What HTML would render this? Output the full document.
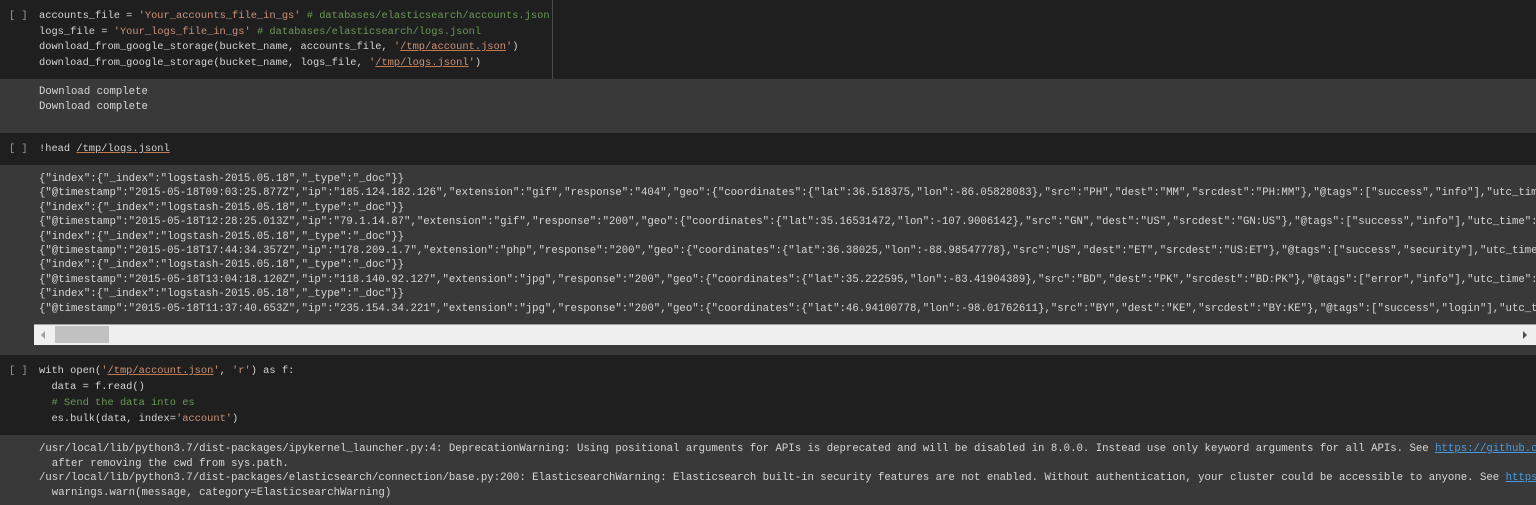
<!DOCTYPE html>
<html><head><meta charset="utf-8"><style>
html,body{margin:0;padding:0;width:1536px;height:505px;overflow:hidden;background:#1f1f1f;font-family:"Liberation Mono",monospace;}
.b{position:absolute;left:0;width:1536px}
.c{background:#1f1f1f}
.o{background:#393939}
.l{position:absolute;white-space:pre;line-height:14px;color:#d4d4d4;font-size:10.38px}
.ol{position:absolute;white-space:pre;line-height:14px;color:#d6d6d6;font-size:10.68px;left:39px}
.s{color:#ce9178}
.u{text-decoration:underline;text-decoration-color:#c07a4e}
.cm{color:#6a9955}
.br{position:absolute;left:9px;color:#9a9a9a;font-size:10.3px;line-height:14px;white-space:pre}
a{color:#4a9be0;text-decoration:underline}
</style></head><body>
<div class="b c" style="top:0;height:79px"></div>
<div style="position:absolute;left:552px;top:0;width:1px;height:79px;background:#4a4a4a"></div>
<div class="b o" style="top:79px;height:54px"></div>
<div class="b c" style="top:133px;height:32px"></div>
<div class="b o" style="top:165px;height:190px"></div>
<div class="b c" style="top:355px;height:80px"></div>
<div class="b o" style="top:435px;height:70px"></div>

<div class="br" style="top:9px">[ ]</div>
<div class="l" style="left:39px;top:9px">accounts_file = <span class="s">'Your_accounts_file_in_gs'</span> <span class="cm"># databases/elasticsearch/accounts.json</span></div>
<div class="l" style="left:39px;top:24.5px">logs_file = <span class="s">'Your_logs_file_in_gs'</span> <span class="cm"># databases/elasticsearch/logs.jsonl</span></div>
<div class="l" style="left:39px;top:40px">download_from_google_storage(bucket_name, accounts_file, <span class="s">'<span class="u">/tmp/account.json</span>'</span>)</div>
<div class="l" style="left:39px;top:55.5px">download_from_google_storage(bucket_name, logs_file, <span class="s">'<span class="u">/tmp/logs.jsonl</span>'</span>)</div>

<div class="ol" style="top:85px">Download complete</div>
<div class="ol" style="top:99.5px">Download complete</div>

<div class="br" style="top:142px">[ ]</div>
<div class="l" style="left:39px;top:142px">!head <span class="u">/tmp/logs.jsonl</span></div>

<div class="ol" style="top:172px">{"index":{"_index":"logstash-2015.05.18","_type":"_doc"}}</div>
<div class="ol" style="top:186.4px">{"@timestamp":"2015-05-18T09:03:25.877Z","ip":"185.124.182.126","extension":"gif","response":"404","geo":{"coordinates":{"lat":36.518375,"lon":-86.05828083},"src":"PH","dest":"MM","srcdest":"PH:MM"},"@tags":["success","info"],"utc_time":</div>
<div class="ol" style="top:200.8px">{"index":{"_index":"logstash-2015.05.18","_type":"_doc"}}</div>
<div class="ol" style="top:215.2px">{"@timestamp":"2015-05-18T12:28:25.013Z","ip":"79.1.14.87","extension":"gif","response":"200","geo":{"coordinates":{"lat":35.16531472,"lon":-107.9006142},"src":"GN","dest":"US","srcdest":"GN:US"},"@tags":["success","info"],"utc_time":</div>
<div class="ol" style="top:229.6px">{"index":{"_index":"logstash-2015.05.18","_type":"_doc"}}</div>
<div class="ol" style="top:244px">{"@timestamp":"2015-05-18T17:44:34.357Z","ip":"178.209.1.7","extension":"php","response":"200","geo":{"coordinates":{"lat":36.38025,"lon":-88.98547778},"src":"US","dest":"ET","srcdest":"US:ET"},"@tags":["success","security"],"utc_time":</div>
<div class="ol" style="top:258.4px">{"index":{"_index":"logstash-2015.05.18","_type":"_doc"}}</div>
<div class="ol" style="top:272.8px">{"@timestamp":"2015-05-18T13:04:18.120Z","ip":"118.140.92.127","extension":"jpg","response":"200","geo":{"coordinates":{"lat":35.222595,"lon":-83.41904389},"src":"BD","dest":"PK","srcdest":"BD:PK"},"@tags":["error","info"],"utc_time":</div>
<div class="ol" style="top:287.2px">{"index":{"_index":"logstash-2015.05.18","_type":"_doc"}}</div>
<div class="ol" style="top:301.6px">{"@timestamp":"2015-05-18T11:37:40.653Z","ip":"235.154.34.221","extension":"jpg","response":"200","geo":{"coordinates":{"lat":46.94100778,"lon":-98.01762611},"src":"BY","dest":"KE","srcdest":"BY:KE"},"@tags":["success","login"],"utc_time":</div>

<div style="position:absolute;left:34px;top:324px;width:1502px;height:21px;background:#f0f0f0;border-top:1px solid #a0a0a0;box-sizing:border-box"></div>
<div style="position:absolute;left:55px;top:326px;width:54px;height:17px;background:#c1c1c1"></div>
<div style="position:absolute;left:41px;top:331px;width:0;height:0;border-top:4px solid transparent;border-bottom:4px solid transparent;border-right:4px solid #a0a0a0"></div>
<div style="position:absolute;left:1523px;top:331px;width:0;height:0;border-top:4px solid transparent;border-bottom:4px solid transparent;border-left:4px solid #505050"></div>

<div class="br" style="top:364px">[ ]</div>
<div class="l" style="left:39px;top:364px">with open(<span class="s">'<span class="u">/tmp/account.json</span>'</span>, <span class="s">'r'</span>) as f:</div>
<div class="l" style="left:39px;top:380px">  data = f.read()</div>
<div class="l" style="left:39px;top:396px">  <span class="cm"># Send the data into es</span></div>
<div class="l" style="left:39px;top:412px">  es.bulk(data, index=<span class="s">'account'</span>)</div>

<div class="ol" style="top:442px">/usr/local/lib/python3.7/dist-packages/ipykernel_launcher.py:4: DeprecationWarning: Using positional arguments for APIs is deprecated and will be disabled in 8.0.0. Instead use only keyword arguments for all APIs. See <a>https://github.com/elastic</a></div>
<div class="ol" style="top:456.5px">  after removing the cwd from sys.path.</div>
<div class="ol" style="top:471px">/usr/local/lib/python3.7/dist-packages/elasticsearch/connection/base.py:200: ElasticsearchWarning: Elasticsearch built-in security features are not enabled. Without authentication, your cluster could be accessible to anyone. See <a>https://www</a></div>
<div class="ol" style="top:485.5px">  warnings.warn(message, category=ElasticsearchWarning)</div>
</body></html>
